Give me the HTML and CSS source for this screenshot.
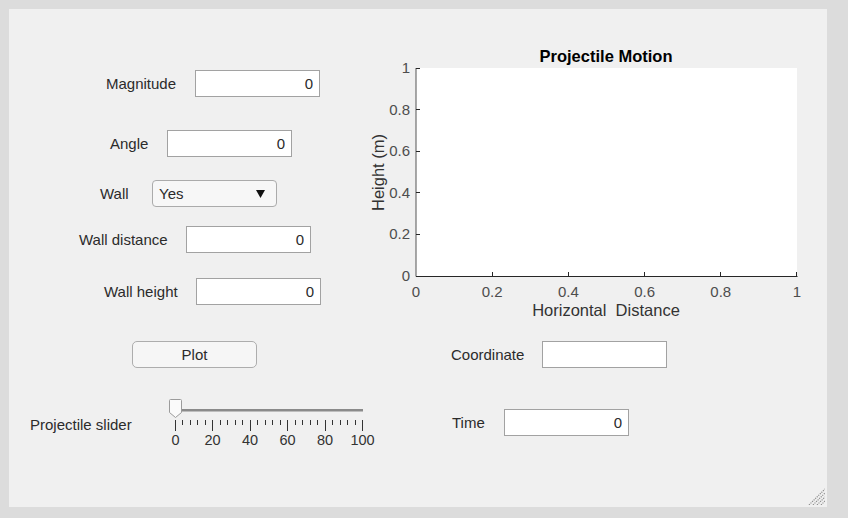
FILE: index.html
```html
<!DOCTYPE html>
<html>

<head>
    <title>Projectile Motion</title>
    <meta charset="UTF-8">
    <link rel="stylesheet" href="styles.css">
</head>

<body>
    <div class="figure">
        <div class="left-col">
            <div class="row row-mag">
                <label for="magnitude">Magnitude</label>
                <input class="field" type="text" id="magnitude" value="0">
            </div>
            <div class="row row-angle">
                <label for="angle">Angle</label>
                <input class="field" type="text" id="angle" value="0">
            </div>
            <div class="row row-wall">
                <label>Wall</label>
                <div class="dropdown">
                    <span>Yes</span>
                    <svg width="9" height="8" viewBox="0 0 9 8"><polygon points="0,0 9,0 4.5,8" fill="#111"/></svg>
                </div>
            </div>
            <div class="row row-dist">
                <label for="wallDistance">Wall distance</label>
                <input class="field" type="text" id="wallDistance" value="0">
            </div>
            <div class="row row-height">
                <label for="wallHeight">Wall height</label>
                <input class="field" type="text" id="wallHeight" value="0">
            </div>
            <div class="row row-plot">
                <button class="btn" type="button">Plot</button>
            </div>
            <div class="row row-slider">
                <label>Projectile slider</label>
                <svg class="slider" width="220" height="56" viewBox="0 0 220 56">
                    <rect x="15" y="13" width="188" height="2" fill="#8a8a8a"/>
                    <rect x="15" y="15" width="188" height="1" fill="#bdbdbd"/>
                    <g stroke="#333" stroke-width="1">
                        <line x1="15.5" y1="24" x2="15.5" y2="35"/>
                        <line x1="22.5" y1="24" x2="22.5" y2="29"/>
                        <line x1="30.5" y1="24" x2="30.5" y2="29"/>
                        <line x1="37.5" y1="24" x2="37.5" y2="29"/>
                        <line x1="45.5" y1="24" x2="45.5" y2="29"/>
                        <line x1="52.5" y1="24" x2="52.5" y2="35"/>
                        <line x1="60.5" y1="24" x2="60.5" y2="29"/>
                        <line x1="67.5" y1="24" x2="67.5" y2="29"/>
                        <line x1="75.5" y1="24" x2="75.5" y2="29"/>
                        <line x1="82.5" y1="24" x2="82.5" y2="29"/>
                        <line x1="90.5" y1="24" x2="90.5" y2="35"/>
                        <line x1="97.5" y1="24" x2="97.5" y2="29"/>
                        <line x1="105.5" y1="24" x2="105.5" y2="29"/>
                        <line x1="112.5" y1="24" x2="112.5" y2="29"/>
                        <line x1="120.5" y1="24" x2="120.5" y2="29"/>
                        <line x1="127.5" y1="24" x2="127.5" y2="35"/>
                        <line x1="135.5" y1="24" x2="135.5" y2="29"/>
                        <line x1="142.5" y1="24" x2="142.5" y2="29"/>
                        <line x1="150.5" y1="24" x2="150.5" y2="29"/>
                        <line x1="157.5" y1="24" x2="157.5" y2="29"/>
                        <line x1="165.5" y1="24" x2="165.5" y2="35"/>
                        <line x1="172.5" y1="24" x2="172.5" y2="29"/>
                        <line x1="180.5" y1="24" x2="180.5" y2="29"/>
                        <line x1="187.5" y1="24" x2="187.5" y2="29"/>
                        <line x1="195.5" y1="24" x2="195.5" y2="29"/>
                        <line x1="202.5" y1="24" x2="202.5" y2="35"/>
                    </g>
                    <g class="slider-labels" text-anchor="middle">
                        <text x="15.5" y="49">0</text>
                        <text x="52.5" y="49">20</text>
                        <text x="90" y="49">40</text>
                        <text x="127.5" y="49">60</text>
                        <text x="165" y="49">80</text>
                        <text x="202.5" y="49">100</text>
                    </g>
                    <path d="M9.5 4.5 Q9.5 3.5 10.5 3.5 H20.5 Q21.5 3.5 21.5 4.5 V16.5 L15.5 21.5 L9.5 16.5 Z" fill="#fafafa" stroke="#9b9b9b"/>
                </svg>
            </div>
        </div>

        <div class="right-col">
            <svg class="chart" width="450" height="285" viewBox="0 0 450 285">
                <rect x="56" y="28" width="381" height="208" fill="#fff"/>
                <text class="chart-title" x="246" y="22" text-anchor="middle">Projectile Motion</text>
                <line x1="56" y1="28" x2="56" y2="236.5" stroke="#555"/>
                <line x1="56" y1="236.5" x2="437.5" y2="236.5" stroke="#262626"/>
                <g stroke="#262626">
                    <line x1="56" y1="194.5" x2="60" y2="194.5"/>
                    <line x1="56" y1="152.5" x2="60" y2="152.5"/>
                    <line x1="56" y1="111.5" x2="60" y2="111.5"/>
                    <line x1="56" y1="69.5" x2="60" y2="69.5"/>
                    <line x1="56" y1="28.5" x2="60" y2="28.5"/>
                    <line x1="132.5" y1="236" x2="132.5" y2="232"/>
                    <line x1="208.5" y1="236" x2="208.5" y2="232"/>
                    <line x1="284.5" y1="236" x2="284.5" y2="232"/>
                    <line x1="360.5" y1="236" x2="360.5" y2="232"/>
                    <line x1="436.5" y1="236" x2="436.5" y2="232"/>
                </g>
                <g class="tick-labels" text-anchor="end">
                    <text x="50" y="241">0</text>
                    <text x="50" y="199.4">0.2</text>
                    <text x="50" y="157.8">0.4</text>
                    <text x="50" y="116.2">0.6</text>
                    <text x="50" y="74.6">0.8</text>
                    <text x="50" y="33">1</text>
                </g>
                <g class="tick-labels" text-anchor="middle">
                    <text x="56" y="256.5">0</text>
                    <text x="132.2" y="256.5">0.2</text>
                    <text x="208.4" y="256.5">0.4</text>
                    <text x="284.6" y="256.5">0.6</text>
                    <text x="360.8" y="256.5">0.8</text>
                    <text x="437" y="256.5">1</text>
                </g>
                <text class="axis-label" x="246" y="276" text-anchor="middle">Horizontal  Distance</text>
                <text class="axis-label" x="24" y="132.5" text-anchor="middle" transform="rotate(-90 24 132.5)">Height (m)</text>
            </svg>
            <div class="row row-coord">
                <label for="coordinate">Coordinate</label>
                <input class="field" type="text" id="coordinate" value="">
            </div>
            <div class="row row-time">
                <label for="time">Time</label>
                <input class="field" type="text" id="time" value="0">
            </div>
        </div>

        <svg class="grip" width="17" height="17" viewBox="0 0 17 17">
            <g stroke="#8e8e8e" stroke-width="1.2" stroke-dasharray="1.2 1">
                <line x1="1" y1="17" x2="17" y2="1"/>
                <line x1="5" y1="17" x2="17" y2="5"/>
                <line x1="9" y1="17" x2="17" y2="9"/>
                <line x1="13" y1="17" x2="17" y2="13"/>
            </g>
        </svg>
    </div>
</body>

</html>
```

FILE: styles.css
```css
html,
body {
    height: 100%;
}

body {
    margin: 0;
    padding: 9px 0 0 9px;
    box-sizing: border-box;
    overflow: hidden;
    background-color: #dcdcdc;
    font-family: "Liberation Sans", Arial, sans-serif;
    font-size: 15px;
    color: #2b2b2b;
}

.figure {
    position: relative;
    display: flex;
    width: 818px;
    height: 498px;
    background-color: #f0f0f0;
}

.left-col {
    flex: none;
    width: 351px;
    padding-top: 61px;
    display: flex;
    flex-direction: column;
}

.right-col {
    flex: none;
    padding-top: 31px;
    display: flex;
    flex-direction: column;
}

.row {
    display: flex;
    align-items: center;
    height: 27px;
}

.row label,
.row svg,
.row .field,
.row .dropdown,
.row .btn {
    flex: none;
}

.field {
    width: 125px;
    height: 27px;
    box-sizing: border-box;
    margin: 0;
    padding: 0 6px 0 4px;
    border: 1px solid #a2a2a2;
    background-color: #fff;
    font: inherit;
    color: #2b2b2b;
    text-align: right;
    outline: none;
}

.dropdown {
    width: 125px;
    height: 27px;
    box-sizing: border-box;
    padding: 0 11px 0 6px;
    display: flex;
    align-items: center;
    justify-content: space-between;
    border: 1px solid #ababab;
    border-radius: 4px;
    background-color: #f7f7f7;
}

.dropdown svg {
    display: block;
}

.btn {
    width: 125px;
    height: 27px;
    margin: 0;
    padding: 0;
    border: 1px solid #adadad;
    border-radius: 5px;
    background-color: #f6f6f6;
    font: inherit;
    color: #2b2b2b;
}

/* rows of the left column */
.row-mag { padding-left: 97px; }
.row-mag label { width: 89px; }

.row-angle { padding-left: 101px; margin-top: 33px; }
.row-angle label { width: 57px; }

.row-wall { padding-left: 91px; margin-top: 23px; }
.row-wall label { width: 52px; }

.row-dist { padding-left: 70px; margin-top: 19px; }
.row-dist label { width: 107px; }

.row-height { padding-left: 95px; margin-top: 25px; }
.row-height label { width: 92px; }

.row-plot { padding-left: 123px; margin-top: 36px; }

.row-slider { padding-left: 21px; margin-top: 28px; height: 56px; }
.row-slider label { width: 130px; }

.slider {
    display: block;
}

.slider-labels {
    font-size: 14.5px;
    fill: #333;
}

/* chart */
.chart {
    display: block;
}

.chart-title {
    font-size: 16.5px;
    font-weight: bold;
    fill: #000;
}

.tick-labels {
    font-size: 15px;
    fill: #4d4d4d;
}

.axis-label {
    font-size: 16.5px;
    fill: #333;
    white-space: pre;
}

/* rows of the right column */
.row-coord { padding-left: 91px; margin-top: 16px; }
.row-coord label { width: 91px; }

.row-time { padding-left: 92px; margin-top: 41px; }
.row-time label { width: 52px; }

.grip {
    position: absolute;
    right: 2px;
    bottom: 2px;
}
```
